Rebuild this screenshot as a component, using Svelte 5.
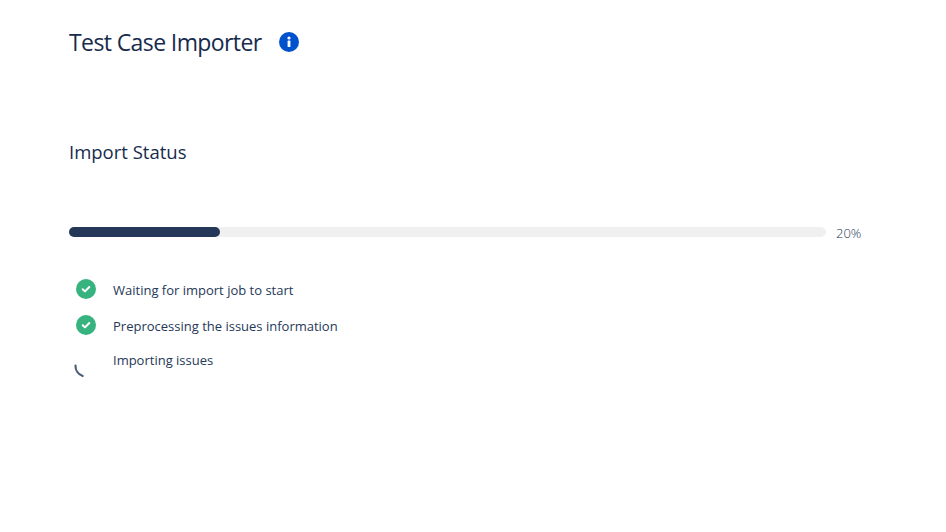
<script>
	let progress = 20;

	const steps = [
		{ label: 'Waiting for import job to start', state: 'done' },
		{ label: 'Preprocessing the issues information', state: 'done' },
		{ label: 'Importing issues', state: 'running' }
	];
</script>

<div class="page">
	<header>
		<h1>Test Case Importer</h1>
		<svg class="info" viewBox="0 0 20 20" width="20" height="20" aria-hidden="true">
			<circle cx="10" cy="10" r="10" fill="#0052cc" />
			<rect x="8.6" y="8.6" width="2.8" height="6.4" rx="0.6" fill="#fff" />
			<circle cx="10" cy="6" r="1.6" fill="#fff" />
		</svg>
	</header>

	<h2>Import Status</h2>

	<div class="progress">
		<div class="track">
			<div class="fill" style="width: {progress}%"></div>
		</div>
		<span class="percent">{progress}%</span>
	</div>

	<ul>
		{#each steps as step}
			<li class={step.state}>
				<span class="icon">
					{#if step.state === 'done'}
						<svg viewBox="0 0 20 20" width="20" height="20" aria-hidden="true">
							<circle cx="10" cy="10" r="10" fill="#36b37e" />
							<path d="M6.7 10.2l2.3 2.2 4.3-4.4" fill="none" stroke="#fff" stroke-width="2" stroke-linecap="round" stroke-linejoin="round" />
						</svg>
					{:else}
						<svg viewBox="0 0 20 20" width="20" height="20" aria-hidden="true">
							<path d="M-0.5 9.5A10.5 10.5 0 0 0 6.7 20" fill="none" stroke="#505f79" stroke-width="2.2" stroke-linecap="round" />
						</svg>
					{/if}
				</span>
				<span class="label">{step.label}</span>
			</li>
		{/each}
	</ul>
</div>

<style>
	:global(body) {
		background: #fff;
		font-family: "Open Sans", "Noto Sans", sans-serif;
		color: #172b4d;
	}

	.page {
		height: 532px;
		box-sizing: border-box;
		padding: 26px 85px 0 69px;
	}

	header {
		display: flex;
		align-items: center;
		gap: 17px;
		height: 32px;
	}

	h1 {
		margin: 0;
		font-size: 23px;
		font-weight: 400;
		line-height: 32px;
		letter-spacing: -0.6px;
	}

	h2 {
		margin: 78px 0 0;
		font-size: 18.5px;
		font-weight: 400;
		line-height: 32px;
	}

	.progress {
		display: flex;
		align-items: center;
		gap: 10px;
		margin-top: 53px;
		height: 22px;
	}

	.track {
		flex: 1;
		height: 10px;
		border-radius: 5px;
		background: #f0f0f0;
	}

	.fill {
		height: 100%;
		border-radius: 5px;
		background: #253858;
	}

	.percent {
		width: 25px;
		margin-top: 2px;
		font-size: 13px;
		font-weight: 300;
		color: #253858;
	}

	ul {
		list-style: none;
		margin: 36px 0 0;
		padding: 0;
	}

	li {
		display: flex;
		height: 36px;
		padding-left: 7px;
	}

	.icon {
		width: 37px;
		height: 20px;
		flex: none;
	}

	.icon svg {
		display: block;
		overflow: visible;
	}

	.label {
		font-size: 13px;
		line-height: 22px;
		color: #253858;
	}

	li.running .icon {
		padding-top: 4.5px;
	}

	li.running .label {
		margin-top: -2px;
	}
</style>
